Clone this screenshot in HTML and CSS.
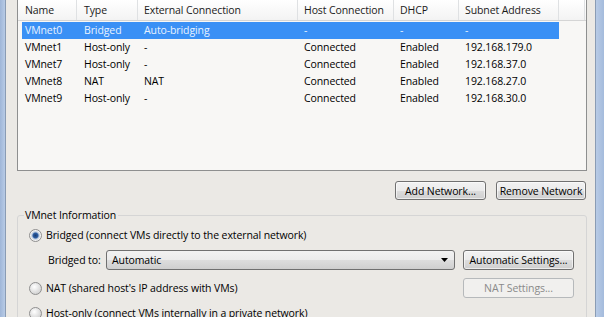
FILE: index.html
```html
<!DOCTYPE html>
<html lang="en">
<head>
    <meta charset="UTF-8">
    <title>Virtual Network Editor</title>
    <link rel="stylesheet" href="styles.css">
</head>
<body>

    <div class="frame-left"></div>

    <div class="dialog">
        <div class="list-box">
            <div class="list-header">
                <div class="col">Name</div>
                <div class="col">Type</div>
                <div class="col">External Connection</div>
                <div class="col">Host Connection</div>
                <div class="col">DHCP</div>
                <div class="col">Subnet Address</div>
                <div class="col filler"></div>
            </div>

            <div class="row selected">
                <div>VMnet0</div><div>Bridged</div><div>Auto-bridging</div><div>-</div><div>-</div><div>-</div>
            </div>
            <div class="row">
                <div>VMnet1</div><div>Host-only</div><div>-</div><div>Connected</div><div>Enabled</div><div>192.168.179.0</div>
            </div>
            <div class="row">
                <div>VMnet7</div><div>Host-only</div><div>-</div><div>Connected</div><div>Enabled</div><div>192.168.37.0</div>
            </div>
            <div class="row">
                <div>VMnet8</div><div>NAT</div><div>NAT</div><div>Connected</div><div>Enabled</div><div>192.168.27.0</div>
            </div>
            <div class="row">
                <div>VMnet9</div><div>Host-only</div><div>-</div><div>Connected</div><div>Enabled</div><div>192.168.30.0</div>
            </div>
        </div>

        <div class="list-buttons">
            <button class="win-button add-button">Add Network...</button>
            <button class="win-button remove-button">Remove Network</button>
        </div>

        <fieldset class="group-box">
            <legend>VMnet Information</legend>

            <label class="radio-row">
                <span class="radio checked"></span>
                Bridged (connect VMs directly to the external network)
            </label>

            <div class="bridge-row">
                <span class="bridge-label">Bridged to:</span>
                <div class="combo">
                    <span>Automatic</span>
                    <svg class="combo-arrow" width="7" height="4" viewBox="0 0 7 4"><polygon points="0,0 7,0 3.5,4" fill="#000"/></svg>
                </div>
                <button class="win-button settings-button">Automatic Settings...</button>
            </div>

            <div class="nat-row">
                <label class="radio-row">
                    <span class="radio"></span>
                    NAT (shared host's IP address with VMs)
                </label>
                <button class="win-button settings-button" disabled>NAT Settings...</button>
            </div>

            <label class="radio-row host-row">
                <span class="radio"></span>
                Host-only (connect VMs internally in a private network)
            </label>
        </fieldset>
    </div>

    <div class="frame-right"></div>

</body>
</html>
```

FILE: styles.css
```css
body {
    margin: 0;
    width: 604px;
    height: 317px;
    overflow: hidden;
    display: flex;
    font-family: 'Open Sans', 'Noto Sans', sans-serif;
    font-size: 10.5px;
    letter-spacing: -0.1px;
    color: #000;
    background: #ebe9e5;
}

.frame-left {
    width: 5px;
    background: linear-gradient(to right, #9fb6d8, #b8cbe6);
    border-right: 1px solid #8a9cb4;
}

.frame-right {
    width: 8px;
    background: linear-gradient(to right, #b8cbe6, #a4bbdc);
    border-left: 1px solid #8a9cb4;
}

.dialog {
    flex: 1;
    padding: 0 8px 0 11px;
    background: #ebe9e5;
}

/* network list */

.list-box {
    margin-top: -1px;
    height: 172px;
    box-sizing: border-box;
    border: 1px solid #8e8f8f;
    background: #f8f7f5;
}

.list-header {
    display: flex;
    height: 20px;
    margin-bottom: 1px;
    border-bottom: 1px solid #d5d5d5;
    background: linear-gradient(to bottom, #ffffff, #f3f3f3);
}

.list-header .col {
    box-sizing: border-box;
    padding-left: 6px;
    line-height: 20px;
    border-right: 1px solid #dfe1e3;
    color: #1a1a1a;
    white-space: nowrap;
}

.list-header .col:nth-child(1) { width: 59px; padding-left: 7px; }
.list-header .col:nth-child(2) { width: 61px; padding-left: 7px; }
.list-header .col:nth-child(3) { width: 160px; }
.list-header .col:nth-child(4) { width: 96px; }
.list-header .col:nth-child(5) { width: 65px; }
.list-header .col:nth-child(6) { width: 100px; }
.list-header .col.filler { width: 26px; }

.row {
    display: grid;
    grid-template-columns: 59px 61px 160px 96px 65px 100px;
    width: 541px;
    height: 17px;
    line-height: 17px;
}

.row div {
    padding-left: 6px;
    white-space: nowrap;
}

.row div:nth-child(1),
.row div:nth-child(2) {
    padding-left: 7px;
}

.row.selected {
    background: linear-gradient(to right, transparent 4px, #3a90f5 4px);
    color: #e8f2ff;
}

/* buttons under the list */

.list-buttons {
    display: flex;
    justify-content: flex-end;
    gap: 10px;
    margin-top: 10px;
    padding-right: 1px;
}

.win-button {
    height: 19px;
    padding: 0;
    font-family: inherit;
    font-size: 10.5px;
    letter-spacing: -0.1px;
    white-space: nowrap;
    color: #000;
    border: 1px solid #707070;
    border-radius: 3px;
    background: linear-gradient(to bottom, #f2f2f2 0%, #ebebeb 50%, #dddddd 51%, #cfcfcf 100%);
    box-shadow: inset 0 0 0 1px rgba(255, 255, 255, 0.6);
}

.win-button:disabled {
    color: #8a8a8a;
    border-color: #b6b9bb;
    background: #f1f0ee;
    box-shadow: none;
}

.add-button {
    width: 91px;
}

.remove-button {
    width: 90px;
}

/* VMnet information group */

.group-box {
    margin: 7px 0 0;
    padding: 0 12px 0 6px;
    min-width: 0;
    border: 1px solid #d5d5d5;
    border-radius: 3px;
}

.group-box legend {
    padding: 0 2px 0 1px;
    line-height: 16px;
}

.radio-row {
    display: flex;
    align-items: center;
    gap: 4px;
    height: 16px;
    margin-top: 4px;
    padding-left: 5px;
    white-space: nowrap;
}

.radio {
    width: 11px;
    height: 11px;
    border: 1px solid #8f8f8f;
    border-radius: 50%;
    background: radial-gradient(circle at 40% 35%, #ffffff, #d6d6d6 70%, #c4c4c4);
    flex-shrink: 0;
}

.radio.checked {
    background: radial-gradient(circle, #1b3c6e 0, #2d5fa6 2.5px, #b9c8dc 3.5px, #f2f2f2 5px);
}

.bridge-row {
    display: flex;
    align-items: center;
    height: 20px;
    margin-top: 7px;
}

.bridge-label {
    box-sizing: border-box;
    width: 82px;
    padding-left: 24px;
}

.combo {
    box-sizing: border-box;
    display: flex;
    align-items: center;
    justify-content: space-between;
    width: 349px;
    height: 20px;
    padding: 0 4px 0 5px;
    border: 1px solid #707070;
    border-radius: 3px;
    background: linear-gradient(to bottom, #f2f2f2 0%, #ebebeb 50%, #dddddd 51%, #cfcfcf 100%);
}

.combo-arrow {
    margin-right: 2px;
}

.settings-button {
    width: 111px;
    height: 20px;
    margin-left: auto;
}

.nat-row {
    display: flex;
    align-items: center;
    height: 20px;
    margin-top: 8px;
}

.nat-row .radio-row {
    margin-top: 0;
}

.host-row {
    margin-top: 7px;
}
```
